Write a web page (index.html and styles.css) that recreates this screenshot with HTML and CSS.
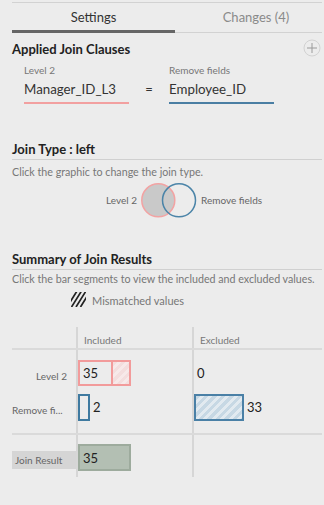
FILE: index.html
```html
<!DOCTYPE html>
<html>
<head>
<meta charset="utf-8">
<link rel="stylesheet" href="styles.css">
</head>
<body>
<div class="panel">
  <div class="tabs">
    <div class="tab tab-active">Settings</div>
    <div class="tab tab-other">Changes (4)</div>
  </div>

  <section class="clauses">
    <div class="sec-head">
      <h2 class="sec-title">Applied Join Clauses</h2>
      <svg class="add" width="18" height="18" viewBox="0 0 18 18">
        <circle cx="9" cy="9" r="8" fill="none" stroke="#d2d2d2" stroke-width="1"/>
        <path d="M9 4v10M4 9h10" stroke="#9a9a9a" stroke-width="1"/>
      </svg>
    </div>
    <div class="clause">
      <div class="field">
        <div class="flabel">Level 2</div>
        <div class="fval fval-left">Manager_ID_L3</div>
      </div>
      <div class="eq">=</div>
      <div class="field">
        <div class="flabel">Remove fields</div>
        <div class="fval fval-right">Employee_ID</div>
      </div>
    </div>
  </section>

  <section class="jointype">
    <h2 class="sec-title ruled">Join Type : left</h2>
    <p class="hint">Click the graphic to change the join type.</p>
    <div class="venn">
      <span class="vlabel">Level 2</span>
      <svg class="venn-svg" width="60" height="38" viewBox="0 0 60 38">
        <circle cx="19.3" cy="19.3" r="16.5" fill="#c9c9c9" stroke="#f2a3a3" stroke-width="1.5"/>
        <circle cx="40" cy="19.3" r="16.5" fill="none" stroke="#4b84a8" stroke-width="1.5"/>
      </svg>
      <span class="vlabel">Remove fields</span>
    </div>
  </section>

  <section class="summary">
    <h2 class="sec-title ruled">Summary of Join Results</h2>
    <p class="hint">Click the bar segments to view the included and excluded values.</p>
    <div class="legend">
      <svg width="16" height="16" viewBox="0 0 16 16">
        <defs><clipPath id="sq"><rect x="0" y="0" width="15" height="15"/></clipPath></defs>
        <g clip-path="url(#sq)" stroke="#222" stroke-width="1.7">
          <path d="M-4 15L6 -1M0.5 15L10.5 -1M5 15L15 -1M9.5 15L19.5 -1"/>
        </g>
      </svg>
      <span class="legend-text">Mismatched values</span>
    </div>

    <div class="table">
      <div class="cell c-label head"></div>
      <div class="cell c-inc head"><span class="colhead">Included</span></div>
      <div class="cell c-exc head"><span class="colhead">Excluded</span></div>

      <div class="hdiv"></div>

      <div class="cell c-label r1"><span class="rlabel">Level 2</span></div>
      <div class="cell c-inc r1">
        <div class="bar bar-pink">
          <div class="seg seg-pink-main"><span class="num">35</span></div>
          <div class="seg seg-pink-hatch"></div>
        </div>
      </div>
      <div class="cell c-exc r1"><span class="num num-zero">0</span></div>

      <div class="cell c-label r2"><span class="rlabel rlabel-trunc">Remove fi...</span></div>
      <div class="cell c-inc r2">
        <div class="bar bar-blue-small"></div>
        <span class="num num-after">2</span>
      </div>
      <div class="cell c-exc r2">
        <div class="bar bar-blue-hatch"></div>
        <span class="num num-after">33</span>
      </div>

      <div class="hdiv"></div>

      <div class="cell c-label r3"><span class="result-label">Join Result</span></div>
      <div class="cell c-inc r3">
        <div class="bar bar-green"><span class="num">35</span></div>
      </div>
      <div class="cell c-exc r3"></div>
    </div>
  </section>
</div>
</body>
</html>
```
FILE: styles.css
```css
html, body {
  margin: 0;
  padding: 0;
  background: #ececec;
}
body {
  font-family: Lato, "Open Sans", sans-serif;
  color: #333;
  width: 324px;
  height: 505px;
  overflow: hidden;
}
.panel {
  padding-top: 2px;
}
.tabs {
  display: flex;
  border-top: 1px solid #d2d2d2;
  margin: 0 2px 0 12px;
  height: 29px;
  border-bottom: 1px solid #d2d2d2;
}
.tab {
  font-size: 13px;
  line-height: 28px;
  text-align: center;
}
.tab-active {
  width: 163px;
  color: #333;
  border-bottom: 3px solid #666;
  margin-bottom: -1px;
  box-sizing: border-box;
  height: 30px;
}
.tab-other {
  flex: 1;
  color: #8a8a8a;
  padding-left: 15px;
}
.sec-title {
  margin: 0;
  font-size: 13px;
  font-weight: 700;
  color: #222;
}
.clauses {
  padding: 0 2px 0 12px;
}
.sec-head {
  display: flex;
  justify-content: space-between;
  align-items: center;
  height: 30px;
  padding-top: 1px;
}
.add {
  margin-right: 1px;
  margin-top: -2px;
}
.clause {
  display: flex;
  padding-left: 12px;
  align-items: flex-start;
}
.field {
  width: 105px;
}
.flabel {
  font-size: 10px;
  color: #777;
  height: 16px;
  line-height: 16px;
  margin-top: -2px;
}
.fval {
  font-size: 13.3px;
  line-height: 22px;
  height: 22px;
  padding-bottom: 2px;
  color: #333;
}
.fval-left { border-bottom: 2px solid #f2a0a0; }
.fval-right { border-bottom: 2px solid #4a7ea3; }
.eq {
  width: 40px;
  text-align: center;
  font-size: 13px;
  margin-top: 14px;
  line-height: 22px;
}
.jointype {
  margin: 36px 2px 0 12px;
}
.ruled {
  border-bottom: 1px solid #d0d0d0;
  height: 19px;
  line-height: 19px;
}
.hint {
  margin: 5px 0 0 0;
  font-size: 10.7px;
  color: #777;
  line-height: 14px;
}
.venn {
  display: flex;
  align-items: center;
  margin-top: 1px;
  padding-left: 94px;
  height: 40px;
}
.vlabel {
  font-size: 10px;
  color: #666;
}
.venn-svg {
  margin: 0 2px 0 2px;
}
.summary {
  margin: 30px 2px 0 12px;
}
.summary .hint {
  margin-top: 2px;
}
.legend {
  display: flex;
  align-items: center;
  margin-top: 6px;
  padding-left: 59px;
  height: 16px;
}
.legend-text {
  font-size: 11px;
  color: #777;
  margin-left: 5px;
}
.table {
  display: grid;
  grid-template-columns: 64px 116px 1fr;
  margin-top: 19px;
}
.cell {
  box-sizing: border-box;
}
.c-inc, .c-exc {
  border-left: 2px solid #d6d6d6;
}
.head {
  height: 21px;
  line-height: 21px;
}
.colhead {
  font-size: 10px;
  color: #777;
  padding-left: 6px;
}
.hdiv {
  grid-column: 1 / -1;
  height: 2px;
  background: #dadada;
}
.r1 { height: 40px; }
.r2 { height: 43px; }
.r3 { height: 42px; }
.c-inc.r1, .c-inc.r2, .c-inc.r3, .c-exc.r2 {
  display: flex;
  align-items: flex-start;
}
.r1 .bar { margin-top: 10px; }
.r2 .bar { margin-top: 4px; }
.r3 .bar { margin-top: 9px; }
.rlabel {
  display: block;
  font-size: 10px;
  color: #666;
  text-align: right;
  padding-right: 9px;
}
.r1 .rlabel { margin-top: 20px; }
.rlabel-trunc {
  margin-top: 14px;
  white-space: nowrap;
  padding-right: 0;
  text-align: left;
}
.bar {
  box-sizing: border-box;
  height: 27px;
}
.bar-pink {
  display: flex;
  width: 53px;
  height: 26px;
  border: 2px solid #f29b9b;
}
.seg-pink-main {
  width: 31px;
  border-right: 2px solid #f29b9b;
  display: flex;
  align-items: center;
}
.seg-pink-hatch {
  flex: 1;
  background: repeating-linear-gradient(135deg, #f3dede 0 3px, #f7e9e9 3px 6px);
}
.num {
  font-size: 13px;
  color: #222;
  padding-left: 3px;
}
.num-zero {
  display: block;
  margin-top: 15px;
  padding-left: 3px;
}
.num-after {
  margin-top: 9px;
  padding-left: 3px;
}
.bar-blue-small {
  width: 12px;
  border: 2px solid #3f7aa0;
}
.bar-blue-hatch {
  width: 50px;
  border: 2px solid #4a80a6;
  background: repeating-linear-gradient(135deg, #c7d8e4 0 3px, #e2eaf0 3px 6px);
}
.bar-green {
  width: 53px;
  background: #b3bfb3;
  border: 2px solid #9dab9d;
  display: flex;
  align-items: center;
}
.result-label {
  display: block;
  margin-top: 16px;
  height: 18px;
  line-height: 18px;
  background: #d5d5d5;
  font-size: 10px;
  color: #666;
  padding-left: 3px;
}
```
